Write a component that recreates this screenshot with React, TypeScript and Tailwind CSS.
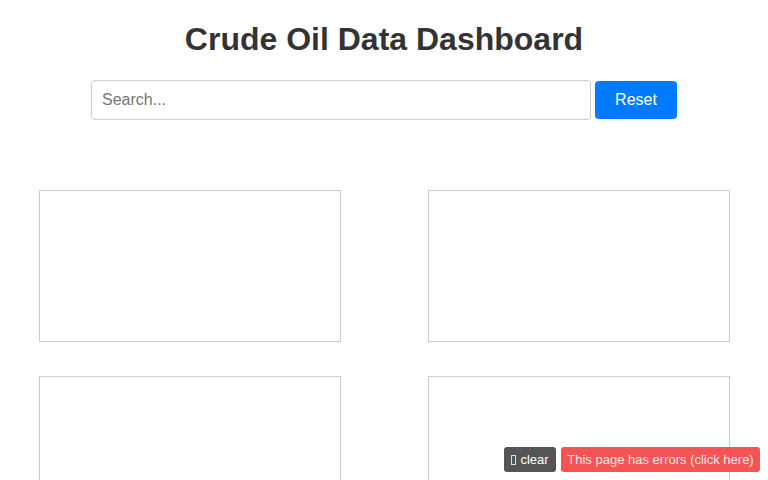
import React from 'react';

const Chart = () => (
  <div className="w-[302px] h-[152px] border border-[#cccccc] bg-white"></div>
);

const App = () => {
  return (
    <div className="min-h-screen bg-white font-['Liberation_Sans',Arial,sans-serif] text-[#333333]">
      {/* Header */}
      <h1 className="pt-[19px] text-center text-[32px] leading-[40px] font-bold">Crude Oil Data Dashboard</h1>

      {/* Search */}
      <div className="mt-[21px] flex justify-center items-center gap-[4px]">
        <input
          type="text"
          placeholder="Search..."
          className="w-[500px] h-[40px] px-[10px] text-[16px] border border-[#cccccc] rounded-[4px] placeholder:text-[#757575] outline-none"
        />
        <button className="w-[82px] h-[38px] bg-[#007bff] text-white text-[16px] rounded-[4px]">Reset</button>
      </div>

      {/* Charts */}
      <div className="mt-[70px] pl-[39px] pr-[38px] grid grid-cols-2 gap-y-[34px]">
        <div className="flex justify-start"><Chart /></div>
        <div className="flex justify-end"><Chart /></div>
        <div className="flex justify-start"><Chart /></div>
        <div className="flex justify-end"><Chart /></div>
      </div>

      {/* Error overlay */}
      <div className="fixed right-[8px] bottom-[8px] flex gap-[5px] text-[13px] leading-[25px]">
        <button className="w-[52px] h-[25px] rounded-[3px] bg-[#555555] text-white flex items-center justify-center gap-[4px]">
          <span className="inline-block w-[5px] h-[10px] border border-white/80"></span>
          clear
        </button>
        <button className="w-[199px] h-[25px] rounded-[3px] bg-[#f55454] text-[#fde8e8] text-center">This page has errors (click here)</button>
      </div>
    </div>
  );
};

export default App;
